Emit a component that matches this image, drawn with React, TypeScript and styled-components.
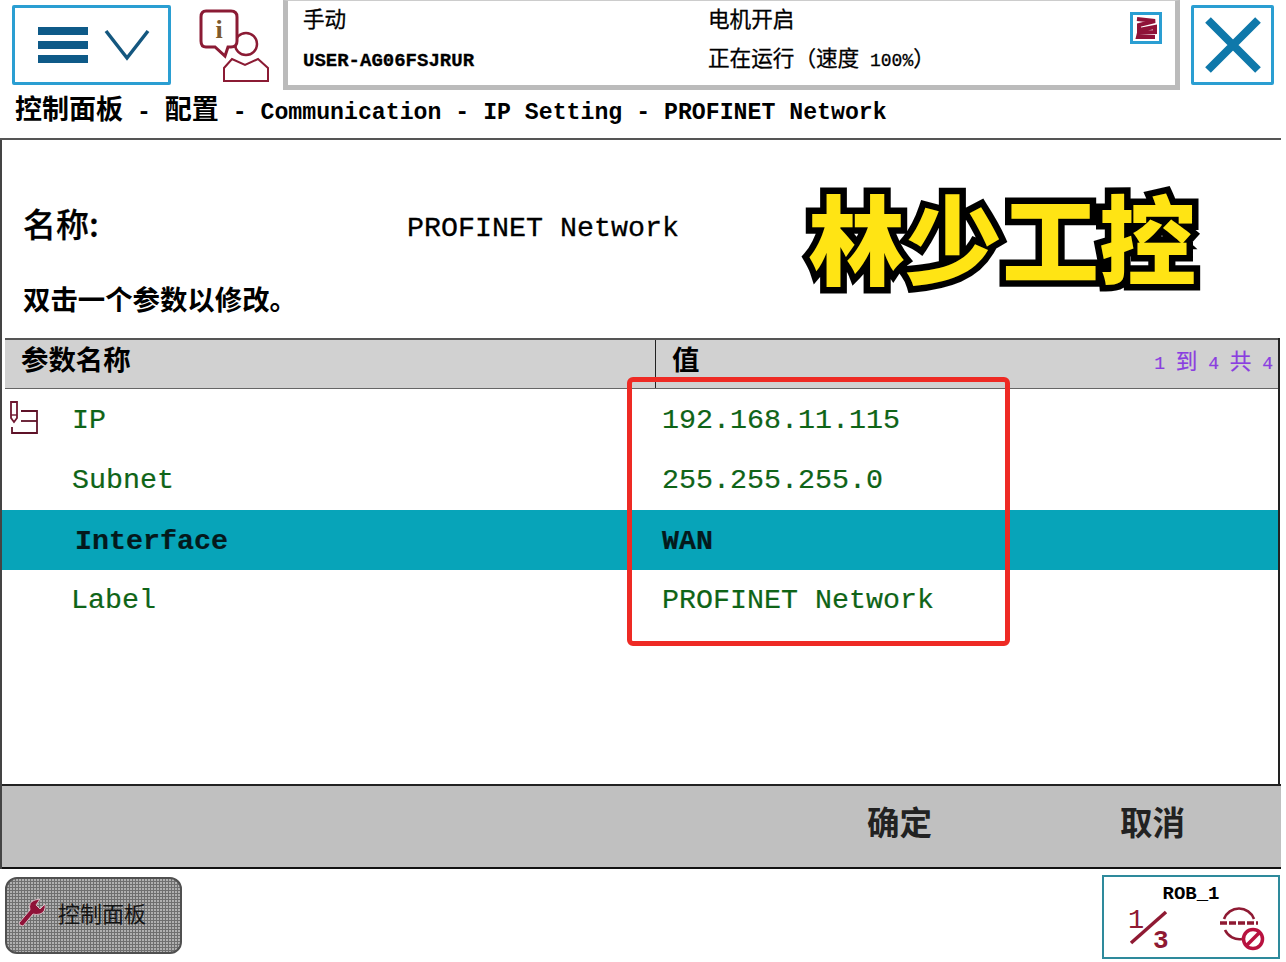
import React from 'react';
import styled, { createGlobalStyle } from 'styled-components';

const MONO = `"Liberation Mono", "Noto Sans CJK SC", monospace`;
const CJK = `"Noto Sans CJK SC", sans-serif`;

const GlobalStyle = createGlobalStyle`
    html, body {
        margin: 0;
        padding: 0;
        background: #fff;
    }
    * {
        box-sizing: border-box;
    }
`;

const Page = styled.div`
    width: 1286px;
    height: 962px;
    overflow: hidden;
    display: flex;
    flex-direction: column;
    font-family: ${MONO};
    color: #000;
`;

// CJK glyphs sit on a wider cell than the mono latin text around them
const Cjk = styled.span<{ size?: number }>`
    font-family: ${CJK};
    font-size: ${props => props.size || 1.2}em;
    line-height: 1;
`;

const Header = styled.header`
    height: 90px;
    flex: none;
    display: flex;
    align-items: flex-start;
`;

const IconButton = styled.button<{ wide?: boolean }>`
    width: ${props => (props.wide ? '159px' : '83px')};
    height: 80px;
    margin: 5px 0 0 ${props => (props.wide ? '12px' : '11px')};
    padding: 0 0 0 ${props => (props.wide ? '5px' : '0')};
    display: flex;
    align-items: center;
    justify-content: center;
    gap: 16px;
    background: #fff;
    border: 3px solid #2a9ed2;
    border-radius: 2px;
`;

const InfoIcon = styled.div`
    width: 112px;
    height: 84px;
    padding: 9px 0 0 28px;
`;

const StatusPanel = styled.div`
    width: 897px;
    height: 90px;
    position: relative;
    display: grid;
    grid-template-columns: 405px 1fr;
    grid-template-rows: 39px 38px;
    padding: 2px 0 0 15px;
    border: 5px solid #bbb;
    border-top: 1px solid #ccc;
`;

const StatusCell = styled.div<{ strong?: boolean }>`
    line-height: ${props => (props.strong ? '38px' : '39px')};
    white-space: pre;
    font-weight: ${props => (props.strong ? 700 : 400)};
    font-size: ${props => (props.strong ? '19px' : '18px')};
    -webkit-text-stroke: 0.3px #000;
`;

const SpeedIcon = styled.div`
    position: absolute;
    top: 11px;
    right: 13px;
    line-height: 0;
`;

const Breadcrumb = styled.nav`
    height: 50px;
    flex: none;
    width: 1281px;
    padding-left: 15px;
    line-height: 46px;
    white-space: pre;
    font-size: 23.2px;
    font-weight: 700;
    border-bottom: 2px solid #555;
`;

const Panel = styled.main`
    position: relative;
    width: 1281px;
    flex: 1;
    display: flex;
    flex-direction: column;
    border-left: 2px solid #444;
`;

const NameRow = styled.div`
    height: 60px;
    margin-top: 58px;
    padding-left: 21px;
    display: grid;
    grid-template-columns: 384px 1fr;
    align-items: center;
    font-size: 28.33px;
    white-space: pre;
    -webkit-text-stroke: 0.3px #000;
`;

const NameLabel = styled.span`
    padding-bottom: 10px;
    font-family: ${CJK};
    font-size: 33px;
    font-weight: 500;
`;

const Watermark = styled.div`
    position: absolute;
    left: 806px;
    top: 30px;
    font-family: ${CJK};
    font-size: 97px;
    line-height: 130px;
    font-weight: 900;
    color: #ffe414;
    -webkit-text-stroke: 13px #000;
    paint-order: stroke fill;
    white-space: nowrap;
`;

const Hint = styled.div`
    height: 40px;
    margin-top: 20px;
    padding-left: 21px;
    display: flex;
    align-items: center;
    font-family: ${CJK};
    font-size: 27.4px;
    font-weight: 700;
`;

const Table = styled.section`
    position: relative;
    margin: 20px 1px 0 0;
    flex: 1;
    display: flex;
    flex-direction: column;
    border-right: 2px solid #222;
`;

const HeadRow = styled.div`
    height: 51px;
    flex: none;
    display: grid;
    grid-template-columns: 650px 1fr auto;
    grid-template-rows: 48px;
    margin: 0 0 1px 3px;
    background: #d1d1d1;
    border-top: 2px solid #555;
    border-bottom: 1px solid #666;
    font-family: ${CJK};
    font-size: 27.4px;
    font-weight: 700;
`;

const HeadCell = styled.div<{ divided?: boolean }>`
    display: flex;
    align-items: center;
    padding-bottom: 12px;
    padding-left: 16px;
    border-left: ${props => (props.divided ? '1px solid #222' : 'none')};
`;

const Pager = styled.div`
    align-self: center;
    padding: 0 5px 6px 0;
    font-family: ${MONO};
    font-size: 18px;
    font-weight: 400;
    color: #8a3ee0;
    white-space: pre;
    -webkit-text-stroke: 0.2px #8a3ee0;
`;

const Row = styled.div<{ selected?: boolean }>`
    height: 60px;
    flex: none;
    display: grid;
    grid-template-columns: 660px 1fr;
    align-items: center;
    padding-top: ${props => (props.selected ? '3px' : '0')};
    font-size: 28.33px;
    white-space: pre;
    font-weight: ${props => (props.selected ? 700 : 400)};
    color: ${props => (props.selected ? '#04191c' : '#0f6417')};
    background: ${props => (props.selected ? '#07a4b9' : 'transparent')};
    -webkit-text-stroke: 0.2px;
`;

const RowName = styled.div<{ nudge?: number }>`
    position: relative;
    padding-left: ${props => 70 + (props.nudge || 0)}px;
`;

const RowIcon = styled.div`
    position: absolute;
    left: 6px;
    top: -3px;
    line-height: 0;
`;

const Highlight = styled.div`
    position: absolute;
    left: 625px;
    top: 39px;
    width: 383px;
    height: 269px;
    border: 5px solid #ee2a24;
    border-radius: 6px;
    pointer-events: none;
`;

const ActionBar = styled.div`
    height: 85px;
    flex: none;
    padding-bottom: 12px;
    display: flex;
    align-items: center;
    justify-content: flex-end;
    background: #c0c0c0;
    border-top: 2px solid #222;
    border-bottom: 2px solid #111;
`;

const ActionButton = styled.span<{ last?: boolean }>`
    margin-right: ${props => (props.last ? '96px' : '188px')};
    font-family: ${CJK};
    font-size: 32.5px;
    font-weight: 700;
    color: #222;
`;

const Footer = styled.footer`
    height: 93px;
    flex: none;
    width: 1281px;
    display: flex;
    justify-content: space-between;
    align-items: flex-start;
    padding: 6px 1px 0 5px;
`;

const PanelButton = styled.button`
    width: 177px;
    height: 77px;
    margin-top: 2px;
    padding: 0 0 8px 10px;
    display: flex;
    align-items: center;
    gap: 11px;
    color: #141414;
    font-family: ${CJK};
    font-size: 22px;
    border: 2px solid #505050;
    border-radius: 12px;
    background-color: #6f6f6f;
    background-image: radial-gradient(circle at 1px 1px, #b0b0b0 0.8px, transparent 1.2px);
    background-size: 3px 3px;
`;

const RobotBox = styled.div`
    width: 178px;
    height: 84px;
    display: flex;
    flex-direction: column;
    align-items: center;
    border: 2px solid #2e8a9c;
`;

const RobotName = styled.div`
    margin-top: 7px;
    font-size: 19px;
    line-height: 20px;
    font-weight: 700;
`;

const RobotIcons = styled.div`
    width: 100%;
    padding: 1px 10px 0 24px;
    display: flex;
    justify-content: space-between;
    line-height: 0;
`;

const MenuGlyph = () => (
    <>
        <svg width="50" height="36" viewBox="0 0 50 36">
            <g fill="#0e5a88">
                <rect x="0" y="0" width="50" height="8" />
                <rect x="0" y="14" width="50" height="8" />
                <rect x="0" y="28" width="50" height="8" />
            </g>
        </svg>
        <svg width="46" height="32" viewBox="0 0 46 32">
            <path d="M2 2 L23 29 L44 2" fill="none" stroke="#14577f" strokeWidth="3.5" />
        </svg>
    </>
);

const InfoGlyph = () => (
    <svg width="72" height="74" viewBox="0 0 72 74">
        <circle cx="47" cy="35" r="11" fill="#fff" stroke="#8b1b34" strokeWidth="2.5" />
        <path
            d="M7 2 H32 Q38 2 38 8 V32 Q38 38 32 38 H29 L26 47 L16 38 H7 Q2 38 2 32 V8 Q2 2 7 2 Z"
            fill="#fff"
            stroke="#8b1b34"
            strokeWidth="3"
        />
        <text x="20" y="29" textAnchor="middle" fontFamily="Liberation Serif, serif" fontSize="26" fontWeight="700" fill="#7d5a2c">
            i
        </text>
        <path d="M25 72 V59 L33 50 L46 56 L59 50 L69 59 V72 Z" fill="#fff" stroke="#8b1b34" strokeWidth="2" />
    </svg>
);

const SpeedGlyph = () => (
    <svg width="32" height="32" viewBox="0 0 32 32">
        <rect x="1.5" y="1.5" width="29" height="29" fill="#fff" stroke="#2a9ed2" strokeWidth="3" />
        <path
            d="M7 7 L25 9 L9 13 L9 18 L25 15 L25 20 L9 21 L8 25 L25 25"
            fill="none"
            stroke="#8f1238"
            strokeWidth="4"
        />
    </svg>
);

const CloseGlyph = () => (
    <svg width="58" height="58" viewBox="0 0 58 58">
        <path d="M4 4 L54 54 M54 4 L4 54" stroke="#0f78aa" strokeWidth="8" />
    </svg>
);

const ParamGlyph = () => (
    <svg width="32" height="34" viewBox="0 0 32 34">
        <path d="M3 1 H9 V17 L6 21 L3 17 Z" fill="#fff" stroke="#6f1730" strokeWidth="1.8" />
        <path d="M3 14 H9" stroke="#6f1730" strokeWidth="1.4" />
        <path d="M13 10 H29 V32 H4 V26" fill="none" stroke="#5e1228" strokeWidth="1.8" />
        <path d="M13 20 H29" stroke="#5e1228" strokeWidth="1.8" />
    </svg>
);

const WrenchGlyph = () => (
    <svg width="30" height="30" viewBox="0 0 30 30">
        <path
            d="M2 26 L13 13 Q11 5 18 3 L23 2 L19 8 L23 12 L28 7 Q29 15 23 17 Q19 18 16 17 L6 29 Q3 29 2 26 Z"
            fill="#8f1238"
            stroke="#e9d6da"
            strokeWidth="0.8"
        />
    </svg>
);

const FractionGlyph = () => (
    <svg width="46" height="52" viewBox="0 0 46 52">
        <g fill="#8f1a33" fontFamily="Liberation Mono, monospace">
            <text x="0" y="23" fontSize="27">1</text>
            <text x="25" y="43" fontSize="26" fontWeight="700">3</text>
        </g>
        <path d="M3 38 L38 7" stroke="#8f1a33" strokeWidth="3.5" />
    </svg>
);

const RobotGlyph = () => (
    <svg width="50" height="48" viewBox="0 0 50 48">
        <path d="M6 14 A16 16 0 0 1 36 14" fill="none" stroke="#8f1a33" strokeWidth="2.6" />
        <path d="M2 18 H40" stroke="#8f1a33" strokeWidth="3.5" strokeDasharray="7 2" />
        <path d="M7 25 A16 16 0 0 0 24 34" fill="none" stroke="#8f1a33" strokeWidth="2.6" />
        <circle cx="35" cy="34" r="9.5" fill="#fff" stroke="#b8123f" strokeWidth="3.5" />
        <path d="M29 40 L41 28" stroke="#b8123f" strokeWidth="3.5" />
    </svg>
);

type Param = { name: string; value: string; nudge?: number; selected?: boolean };

const params: Param[] = [
    { name: 'IP', value: '192.168.11.115' },
    { name: 'Subnet', value: '255.255.255.0' },
    { name: 'Interface', value: 'WAN', nudge: 3, selected: true },
    { name: 'Label', value: 'PROFINET Network', nudge: -1 },
];

export default function App() {
    return (
        <Page>
            <GlobalStyle />
            <Header>
                <IconButton wide aria-label="菜单">
                    <MenuGlyph />
                </IconButton>
                <InfoIcon>
                    <InfoGlyph />
                </InfoIcon>
                <StatusPanel>
                    <StatusCell><Cjk>手动</Cjk></StatusCell>
                    <StatusCell><Cjk>电机开启</Cjk></StatusCell>
                    <StatusCell strong>USER-AG06FSJRUR</StatusCell>
                    <StatusCell><Cjk>正在运行（速度</Cjk> 100%<Cjk>）</Cjk></StatusCell>
                    <SpeedIcon><SpeedGlyph /></SpeedIcon>
                </StatusPanel>
                <IconButton aria-label="关闭">
                    <CloseGlyph />
                </IconButton>
            </Header>
            <Breadcrumb>
                <Cjk size={1.164}>控制面板</Cjk> - <Cjk size={1.164}>配置</Cjk> - Communication - IP Setting - PROFINET Network
            </Breadcrumb>
            <Panel>
                <NameRow>
                    <NameLabel>名称:</NameLabel>
                    <span>PROFINET Network</span>
                </NameRow>
                <Watermark>林少工控</Watermark>
                <Hint>双击一个参数以修改。</Hint>
                <Table>
                    <HeadRow>
                        <HeadCell>参数名称</HeadCell>
                        <HeadCell divided>值</HeadCell>
                        <Pager>1 <Cjk>到</Cjk> 4 <Cjk>共</Cjk> 4</Pager>
                    </HeadRow>
                    {params.map((param, index) => (
                        <Row key={param.name} selected={param.selected}>
                            <RowName nudge={param.nudge}>
                                {index === 0 && (
                                    <RowIcon><ParamGlyph /></RowIcon>
                                )}
                                {param.name}
                            </RowName>
                            <span>{param.value}</span>
                        </Row>
                    ))}
                    <Highlight />
                </Table>
                <ActionBar>
                    <ActionButton>确定</ActionButton>
                    <ActionButton last>取消</ActionButton>
                </ActionBar>
            </Panel>
            <Footer>
                <PanelButton>
                    <WrenchGlyph />
                    控制面板
                </PanelButton>
                <RobotBox>
                    <RobotName>ROB_1</RobotName>
                    <RobotIcons>
                        <FractionGlyph />
                        <RobotGlyph />
                    </RobotIcons>
                </RobotBox>
            </Footer>
        </Page>
    );
}
